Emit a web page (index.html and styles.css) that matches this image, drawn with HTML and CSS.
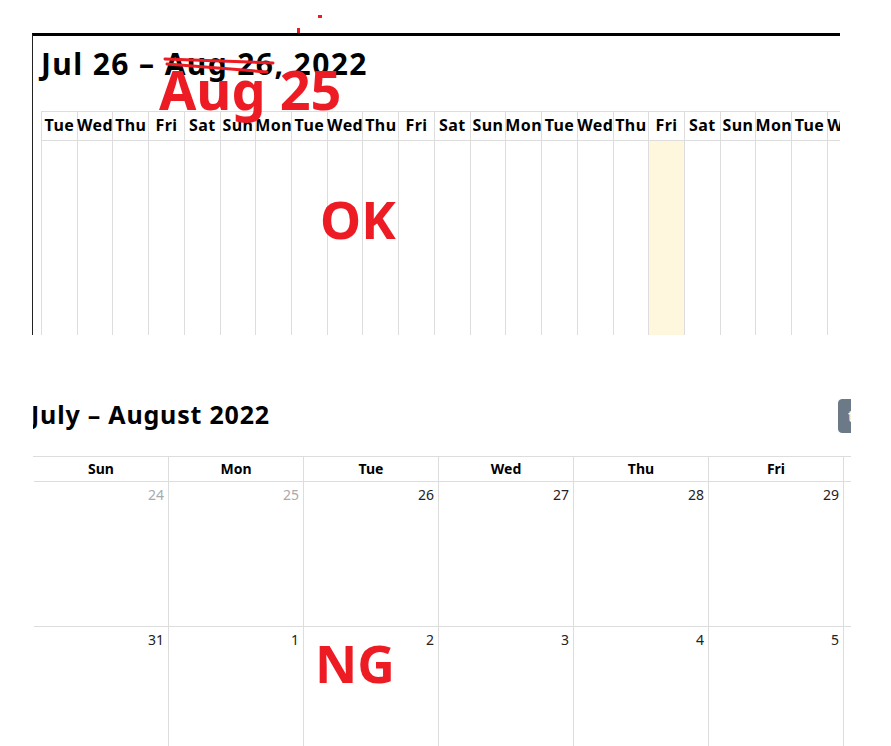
FILE: index.html
```html
<!DOCTYPE html>
<html>
<head>
<meta charset="utf-8">
<link rel="stylesheet" href="styles.css">
</head>
<body>
<div class="page">
  <section class="week-view">
    <h1 class="week-title">Jul 26 – Aug 26, 2022</h1>
    <div class="week-grid">
      <div class="wk-head">Tue</div><div class="wk-head">Wed</div><div class="wk-head">Thu</div><div class="wk-head">Fri</div><div class="wk-head">Sat</div><div class="wk-head">Sun</div><div class="wk-head">Mon</div>
      <div class="wk-head">Tue</div><div class="wk-head">Wed</div><div class="wk-head">Thu</div><div class="wk-head">Fri</div><div class="wk-head">Sat</div><div class="wk-head">Sun</div><div class="wk-head">Mon</div>
      <div class="wk-head">Tue</div><div class="wk-head">Wed</div><div class="wk-head">Thu</div><div class="wk-head">Fri</div><div class="wk-head">Sat</div><div class="wk-head">Sun</div><div class="wk-head">Mon</div>
      <div class="wk-head">Tue</div><div class="wk-head">Wed</div><div class="wk-head">Thu</div><div class="wk-head">Fri</div><div class="wk-head">Sat</div><div class="wk-head">Sun</div><div class="wk-head">Mon</div>
      <div class="wk-head">Tue</div><div class="wk-head">Wed</div><div class="wk-head">Thu</div>
      <div class="wk-body"></div><div class="wk-body"></div><div class="wk-body"></div><div class="wk-body"></div><div class="wk-body"></div><div class="wk-body"></div><div class="wk-body"></div>
      <div class="wk-body"></div><div class="wk-body"></div><div class="wk-body"></div><div class="wk-body"></div><div class="wk-body"></div><div class="wk-body"></div><div class="wk-body"></div>
      <div class="wk-body"></div><div class="wk-body"></div><div class="wk-body"></div><div class="wk-body today"></div><div class="wk-body"></div><div class="wk-body"></div><div class="wk-body"></div>
      <div class="wk-body"></div><div class="wk-body"></div><div class="wk-body"></div><div class="wk-body"></div><div class="wk-body"></div><div class="wk-body"></div><div class="wk-body"></div>
      <div class="wk-body"></div><div class="wk-body"></div><div class="wk-body"></div>
    </div>
  </section>

  <section class="month-view">
    <div class="month-inner">
      <div class="toolbar">
        <h2 class="month-title">July – August 2022</h2>
        <div class="tools">
          <button class="btn">today</button>
          <div class="btn-group"><button class="btn nav">‹</button><button class="btn nav">›</button></div>
        </div>
      </div>
      <div class="month-grid">
        <div class="m-head">Sun</div><div class="m-head">Mon</div><div class="m-head">Tue</div><div class="m-head">Wed</div><div class="m-head">Thu</div><div class="m-head">Fri</div><div class="m-head">Sat</div>
        <div class="m-day other">24</div><div class="m-day other">25</div><div class="m-day">26</div><div class="m-day">27</div><div class="m-day">28</div><div class="m-day">29</div><div class="m-day">30</div>
        <div class="m-day">31</div><div class="m-day">1</div><div class="m-day">2</div><div class="m-day">3</div><div class="m-day">4</div><div class="m-day">5</div><div class="m-day">6</div>
      </div>
    </div>
  </section>

  <span class="mark mark-a"></span>
  <span class="mark mark-b"></span>
  <svg class="strike" width="120" height="20" viewBox="0 0 120 20">
    <path d="M2 4 L110 8" stroke="#ed1c24" stroke-width="3" fill="none" stroke-linecap="round"/>
    <path d="M4 9 L104 17" stroke="#ed1c24" stroke-width="3" fill="none" stroke-linecap="round"/>
  </svg>
  <div class="note note-aug">Aug 25</div>
  <div class="note note-ok">OK</div>
  <div class="note note-ng">NG</div>
</div>
</body>
</html>
```

FILE: styles.css
```css
html, body {
  margin: 0;
  padding: 0;
  background: #fff;
}
body {
  font-family: "Noto Sans", "DejaVu Sans", sans-serif;
  color: #000;
  overflow: hidden;
  height: 746px;
}
.page {
  position: relative;
  padding-top: 33px;
}

/* ---------- top week view ---------- */
.week-view {
  margin-left: 32px;
  width: 799px;
  height: 299px;
  border-top: 3px solid #000;
  border-left: 1px solid #222;
  overflow: hidden;
  padding-left: 8px;
  box-sizing: content-box;
}
.week-title {
  margin: 10px 0 29px 0;
  font-size: 30px;
  line-height: 36px;
  font-weight: 700;
  letter-spacing: 1.4px;
  white-space: nowrap;
}
.week-grid {
  display: grid;
  grid-template-columns: repeat(31, 35.73px);
  grid-template-rows: 29px 195px;
  border-top: 1px solid #ddd;
  border-left: 1px solid #ddd;
  width: max-content;
}
.wk-head {
  border-right: 1px solid #ddd;
  border-bottom: 1px solid #ddd;
  font-size: 16px;
  font-weight: 700;
  line-height: 26px;
  letter-spacing: 0.4px;
  white-space: nowrap;
  display: flex;
  justify-content: center;
}
.wk-body {
  border-right: 1px solid #ddd;
}
.wk-body.today {
  background: #fef7de;
}

/* ---------- month view ---------- */
.month-view {
  margin-top: 64px;
  margin-left: 33px;
  width: 818px;
  overflow: hidden;
}
.month-inner {
  width: 946px;
}
.toolbar {
  display: flex;
  justify-content: space-between;
  align-items: center;
  height: 34px;
  margin-bottom: 23px;
}
.month-title {
  margin: 0 0 0 -2px;
  font-size: 25px;
  font-weight: 700;
  line-height: 30px;
  padding-bottom: 4px;
  letter-spacing: 0.8px;
  white-space: nowrap;
}
.tools {
  display: flex;
  gap: 6px;
  height: 34px;
}
.btn-group {
  display: flex;
}
.btn {
  font-family: "Noto Sans", sans-serif;
  font-size: 16px;
  background: #6c7a88;
  color: #fff;
  border: 1px solid #6c7a88;
  border-radius: 4px;
  height: 34px;
  padding: 0 9px;
  width: 55px;
  text-align: left;
  line-height: 30px;
}
.btn.nav {
  width: 40px;
  text-align: center;
  background: #2c3e50;
  border-color: #2c3e50;
}
.month-grid {
  display: grid;
  grid-template-columns: repeat(7, 135px);
  grid-template-rows: 25px 145px 145px;
  border-top: 1px solid #ddd;
  padding-left: 1px;
}
.m-head {
  border-right: 1px solid #ddd;
  border-bottom: 1px solid #ddd;
  font-size: 14px;
  font-weight: 700;
  line-height: 24px;
  text-align: center;
}
.m-day {
  border-right: 1px solid #ddd;
  border-bottom: 1px solid #ddd;
  font-size: 14px;
  line-height: 21px;
  padding: 2px 4px 0 0;
  text-align: right;
  color: #222;
}
.m-day.other {
  color: #aaa;
}

/* ---------- annotation overlays ---------- */
.mark {
  position: absolute;
  background: #ed1c24;
}
.mark-a {
  left: 297px;
  top: 28px;
  width: 3px;
  height: 5px;
}
.mark-b {
  left: 318px;
  top: 15px;
  width: 4px;
  height: 3px;
}
.strike {
  position: absolute;
  left: 163px;
  top: 55px;
}
.note {
  position: absolute;
  color: #ed1c24;
  font-weight: 700;
  font-size: 54px;
  line-height: 54px;
  white-space: nowrap;
}
.note-aug {
  left: 159px;
  top: 62px;
}
.note-ok {
  left: 320px;
  top: 193px;
  font-size: 52px;
  line-height: 52px;
}
.note-ng {
  left: 315px;
  top: 637px;
  font-size: 52px;
  line-height: 52px;
}
```
